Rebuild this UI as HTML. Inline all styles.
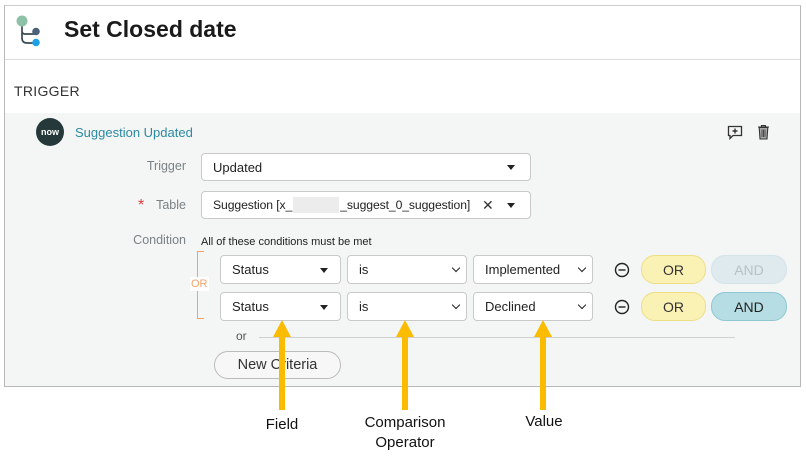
<!DOCTYPE html>
<html><head><meta charset="utf-8"><style>
*{box-sizing:border-box;margin:0;padding:0}
body{width:806px;height:460px;background:#fff;font-family:"Liberation Sans",sans-serif;position:relative;overflow:hidden;color:#222}
.a{position:absolute}
.frame{left:4px;top:5px;width:797px;height:382px;border:1px solid #b8b8b8;border-top-color:#ccc}
.gray{left:5px;top:113px;width:795px;height:273px;background:#f4f5f5}
.box{position:absolute;background:#fff;border:1px solid #c9c9c9;border-radius:4px;font-size:13px;color:#222;padding-left:11px;display:flex;align-items:center;white-space:nowrap}
.lbl{position:absolute;font-size:12.5px;color:#7a8285;text-align:right}
.tri{position:absolute;width:0;height:0;border-left:4px solid transparent;border-right:4px solid transparent;border-top:5px solid #222}
.chev{position:absolute;width:6px;height:6px;border-right:1.6px solid #222;border-bottom:1.6px solid #222;transform:rotate(45deg)}
.pill{position:absolute;border-radius:14px;font-size:14px;display:flex;align-items:center;justify-content:center}
.arrow{position:absolute;width:6px;background:#fbbc00}
.head{position:absolute;width:0;height:0;border-left:9px solid transparent;border-right:9px solid transparent;border-bottom:17px solid #fbbc00}
.cap{position:absolute;font-size:15px;color:#111;text-align:center}
</style></head><body>
<div class="a frame"></div>
<div class="a" style="left:5px;top:59px;width:795px;height:1px;background:#ddd"></div>
<div class="a gray"></div>
<svg class="a" style="left:14px;top:14px" width="28" height="34" viewBox="0 0 28 34">
<path d="M8 7 V24 Q8 29 13 29 H21 M8 17 Q8 20 11 20 H21" fill="none" stroke="#3a4a55" stroke-width="1.7"/>
<circle cx="8" cy="7" r="5.5" fill="#8dc2a8"/><circle cx="22" cy="17.5" r="3.8" fill="#4a6178"/><circle cx="22" cy="28.5" r="3.8" fill="#1ea0e6"/></svg>
<div class="a" style="left:64px;top:16px;font-size:23px;font-weight:bold;color:#1a1a1a">Set Closed date</div>
<div class="a" style="left:14px;top:83px;font-size:14px;color:#333;letter-spacing:0.3px">TRIGGER</div>
<div class="a" style="left:36px;top:118px;width:28px;height:28px;border-radius:50%;background:#25393b;color:#fff;font-size:9px;font-weight:bold;display:flex;align-items:center;justify-content:center">now</div>
<div class="a" style="left:75px;top:125px;font-size:13px;color:#2b8aa3">Suggestion Updated</div>
<svg class="a" style="left:727px;top:125px" width="16" height="15" viewBox="0 0 16 15"><path d="M1.5 1.5 H14.5 V10.5 H6 L3 13.5 V10.5 H1.5 Z" fill="none" stroke="#333" stroke-width="1.3"/><path d="M8 3.5 V8.5 M5.5 6 H10.5" stroke="#333" stroke-width="1.4"/></svg>
<svg class="a" style="left:757px;top:124px" width="13" height="16" viewBox="0 0 13 16"><path d="M1 3 H12 M4.5 3 V1.5 H8.5 V3 M2.2 3.5 L3 15 H10 L10.8 3.5 Z" fill="#aaa" stroke="#333" stroke-width="1.1"/><path d="M5 5.5 V13 M6.5 5.5 V13 M8 5.5 V13" stroke="#333" stroke-width="0.8"/></svg>
<div class="lbl" style="left:120px;top:159px;width:66px">Trigger</div>
<div class="box" style="left:201px;top:153px;width:330px;height:28px">Updated</div>
<div class="tri" style="left:507px;top:165px"></div>
<div class="a" style="left:138px;top:197px;color:#e03b3b;font-size:16px">*</div>
<div class="lbl" style="left:120px;top:198px;width:66px">Table</div>
<div class="box" style="left:201px;top:191px;width:330px;height:28px;font-size:12.2px;letter-spacing:-0.1px">Suggestion [x_<span style="display:inline-block;width:46px;height:16px;background:#ececec;margin:0 1px"></span>_suggest_0_suggestion]</div>
<div class="a" style="left:482px;top:197px;font-size:14px;color:#333">✕</div>
<div class="tri" style="left:507px;top:203px"></div>
<div class="lbl" style="left:110px;top:233px;width:76px">Condition</div>
<div class="a" style="left:201px;top:236px;font-size:11px;color:#222">All of these conditions must be met</div>
<div class="a" style="left:197px;top:251px;width:7px;height:68px;border:1.3px solid #f5a26a;border-right:none"></div>
<div class="a" style="left:190px;top:277px;background:#fff;font-size:11px;color:#f5a26a;padding:1px 1px">OR</div>

<div class="box" style="left:220px;top:255px;width:121px;height:29px">Status</div><div class="tri" style="left:320px;top:268px"></div>
<div class="box" style="left:347px;top:255px;width:120px;height:29px">is</div><div class="chev" style="left:453px;top:265px"></div>
<div class="box" style="left:473px;top:255px;width:120px;height:29px">Implemented</div><div class="chev" style="left:579px;top:265px"></div>
<div class="box" style="left:220px;top:292px;width:121px;height:29px">Status</div><div class="tri" style="left:320px;top:305px"></div>
<div class="box" style="left:347px;top:292px;width:120px;height:29px">is</div><div class="chev" style="left:453px;top:302px"></div>
<div class="box" style="left:473px;top:292px;width:120px;height:29px">Declined</div><div class="chev" style="left:579px;top:302px"></div>

<svg class="a" style="left:614px;top:262px" width="16" height="16"><circle cx="8" cy="8" r="6.5" fill="none" stroke="#222" stroke-width="1.4"/><path d="M4.5 8 H11.5" stroke="#222" stroke-width="1.4"/></svg>
<svg class="a" style="left:614px;top:299px" width="16" height="16"><circle cx="8" cy="8" r="6.5" fill="none" stroke="#222" stroke-width="1.4"/><path d="M4.5 8 H11.5" stroke="#222" stroke-width="1.4"/></svg>
<div class="pill" style="left:641px;top:255px;width:65px;height:29px;background:#faf1b5;border:1px solid #eede85;color:#333">OR</div>
<div class="pill" style="left:711px;top:255px;width:76px;height:29px;background:#dfeaee;border:1px solid #d4e3e8;color:#b6c2c6">AND</div>
<div class="pill" style="left:641px;top:292px;width:65px;height:29px;background:#faf1b5;border:1px solid #eede85;color:#333">OR</div>
<div class="pill" style="left:711px;top:292px;width:76px;height:29px;background:#b5dde3;border:1px solid #8ec7d1;color:#222">AND</div>

<div class="a" style="left:236px;top:329px;font-size:12px;color:#555">or</div>
<div class="a" style="left:259px;top:337px;width:476px;height:1px;background:#d0d0d0"></div>
<div class="pill" style="left:214px;top:351px;width:127px;height:28px;background:#f7f7f7;border:1px solid #bbb;color:#333;font-size:14.5px;border-radius:15px">New Criteria</div>

<div class="head" style="left:273px;top:320px"></div><div class="arrow" style="left:279px;top:336px;height:74px"></div>
<div class="head" style="left:396px;top:320px"></div><div class="arrow" style="left:402px;top:336px;height:74px"></div>
<div class="head" style="left:534px;top:320px"></div><div class="arrow" style="left:540px;top:336px;height:74px"></div>

<div class="cap" style="left:252px;top:416px;width:60px">Field</div>
<div class="cap" style="left:345px;top:413px;width:120px;line-height:20px">Comparison<br>Operator</div>
<div class="cap" style="left:514px;top:413px;width:60px">Value</div>
</body></html>
